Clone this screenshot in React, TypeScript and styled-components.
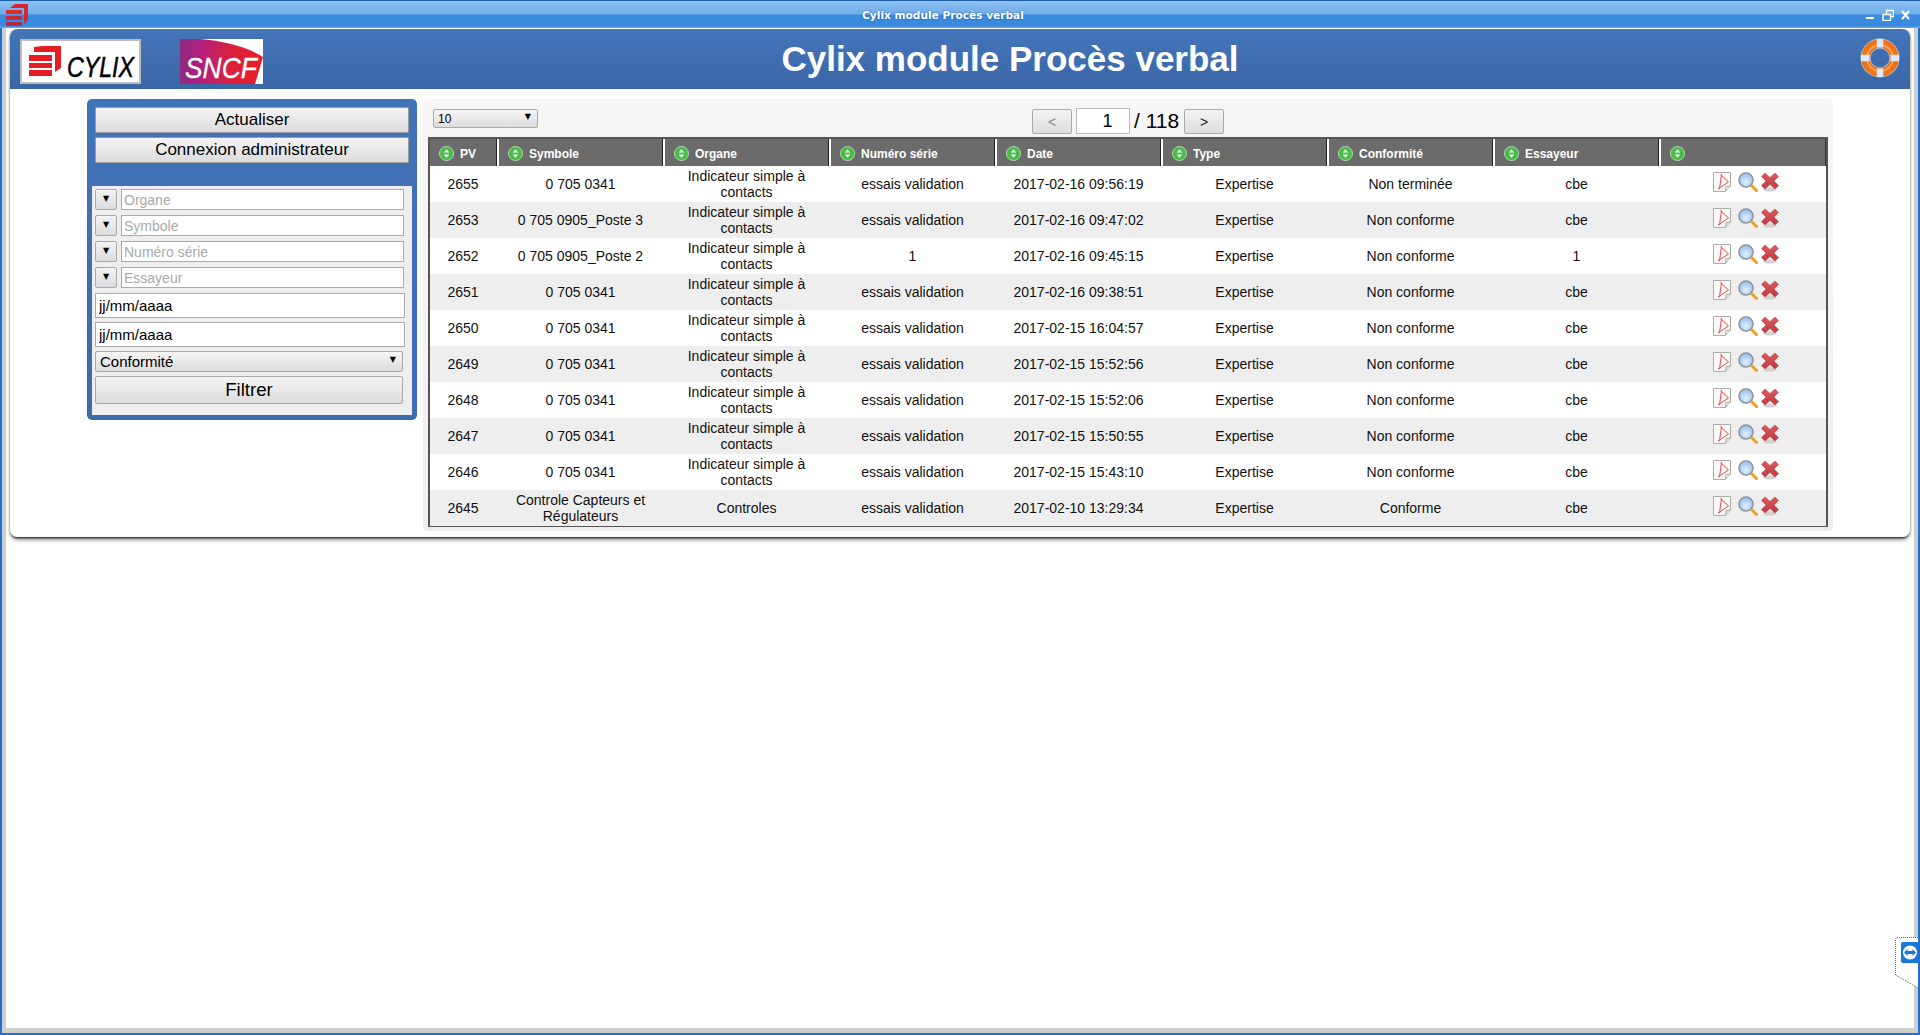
import React from "react";
import styled, { createGlobalStyle } from "styled-components";

const Global = createGlobalStyle`
  html, body { margin: 0; padding: 0; height: 100%; background: #fff; }
  #root { height: 100%; }
  * { box-sizing: border-box; }
`;

const Sans = `"Liberation Sans", Arial, sans-serif`;

const Frame = styled.div`
  height: 1035px;
  display: flex;
  flex-direction: column;
  font-family: ${Sans};
  overflow: hidden;
  position: relative;
`;

const TitleBar = styled.div`
  height: 28px;
  flex: none;
  display: flex;
  align-items: center;
  position: relative;
  padding-left: 5px;
  border-top: 1px solid #1f5fa8;
  background: linear-gradient(180deg, #8fc2f1 0%, #6fadec 48%, #3b8bdf 52%, #3a89dd 92%, #6aa9ea 100%);
`;

const TitleText = styled.div`
  flex: 1;
  text-align: center;
  color: #fff;
  font: bold 10.6px "DejaVu Sans", sans-serif;
  margin-right: 9px;
  text-shadow: 0 0 2px rgba(20, 60, 120, 0.7);
`;

const WinControls = styled.div`
  display: flex;
  align-items: center;
  gap: 7.5px;
  margin: 1px 10px 0 0;
`;

const FrameBody = styled.div`
  flex: 1;
  display: flex;
  flex-direction: column;
  border-style: solid;
  border-color: #1f70d0;
  border-width: 0 2px 2px 2px;
`;

const GrayFrame = styled.div`
  flex: 1;
  border-style: solid;
  border-color: #cdcdcd;
  border-width: 0 4px 5px 4px;
  background: #fff;
  padding: 1px 4px 0 4px;
`;

const Card = styled.div`
  background: #fff;
  border-radius: 8px;
  box-shadow: -1px 0 0 #c4c4c4, 1px 0 0 #c4c4c4, 0 1px 0 0 #444, 0 2px 1px 0 #777, 0 3px 3px 1px #bbb;
  height: 508px;
  display: flex;
  flex-direction: column;
`;

const Header = styled.header`
  height: 60px;
  flex: none;
  display: flex;
  align-items: center;
  position: relative;
  padding-left: 10px;
  border-radius: 8px 8px 0 0;
  background: linear-gradient(180deg, #4475ba 0%, #3a66a6 100%);
`;

const LogoBox = styled.div<{ $ml?: number; $w: number }>`
  width: ${(p) => p.$w}px;
  height: 45px;
  margin-left: ${(p) => p.$ml ?? 0}px;
  flex: none;
  margin-top: 5px;
`;

const HeaderTitle = styled.h1`
  flex: 1;
  margin: 0;
  padding-right: 102px;
  text-align: center;
  color: #fff;
  font: bold 35px ${Sans};
  white-space: nowrap;
`;

const Help = styled.div`
  width: 42px;
  height: 42px;
  flex: none;
  margin-right: 9px;
  margin-top: -2px;
`;

const Content = styled.div`
  display: flex;
  align-items: flex-start;
  padding: 10px 0 0 77px;
`;

const Side = styled.aside`
  width: 330px;
  height: 321px;
  flex: none;
  background: linear-gradient(180deg, #4173b8 0%, #3d6cae 100%);
  border-radius: 5px;
  padding: 8px 5px 5px;
  display: flex;
  flex-direction: column;
`;

const GradBtn = styled.button<{ $w?: number; $h: number; $fs: number }>`
  display: block;
  width: ${(p) => (p.$w ? `${p.$w}px` : "100%")};
  height: ${(p) => p.$h}px;
  padding: 0;
  border: 1px solid #9c9c9c;
  border-radius: 1px;
  color: #000;
  font: ${(p) => p.$fs}px ${Sans};
  background: linear-gradient(180deg, #f4f4f4 0%, #dcdcdc 100%);
`;

const TopBtns = styled.div`
  display: flex;
  flex-direction: column;
  gap: 4px;
  padding: 0 3px;
`;

const FilterBox = styled.div`
  margin-top: 23px;
  flex: 1;
  background: #eee;
  padding: 3px;
  display: flex;
  flex-direction: column;
`;

const ComboRow = styled.div`
  display: flex;
  gap: 4px;
  height: 21px;
  margin-bottom: 5px;
  width: 309px;
`;

const ArrowBtn = styled.div`
  width: 22px;
  height: 21px;
  flex: none;
  display: flex;
  justify-content: center;
  padding-top: 4px;
  font: 8px "DejaVu Sans", sans-serif;
  color: #000;
  border: 1px solid #aaa;
  border-radius: 2px;
  background: linear-gradient(180deg, #f4f4f4 0%, #dcdcdc 100%);
`;

const TextIn = styled.input`
  flex: 1;
  min-width: 0;
  height: 21px;
  border: 1px solid #aaa;
  background: #fff;
  padding: 0 2px;
  font: 14px ${Sans};
  &::placeholder { color: #aaa; opacity: 1; }
`;

const DateIn = styled.input`
  display: block;
  width: 310px;
  height: 25px;
  border: 1px solid #aaa;
  background: #fff;
  padding: 0 3px 1px;
  margin-bottom: 4px;
  font: 15px ${Sans};
  color: #000;
  &::placeholder { color: #000; opacity: 1; }
`;

const Dropdown = styled.div<{ $w: number; $h: number; $fs: number; $pl: number }>`
  width: ${(p) => p.$w}px;
  height: ${(p) => p.$h}px;
  display: flex;
  align-items: center;
  justify-content: space-between;
  padding: 0 6px 0 ${(p) => p.$pl}px;
  color: #000;
  font: ${(p) => p.$fs}px ${Sans};
  border: 1px solid #aaa;
  border-radius: 2px;
  background: linear-gradient(180deg, #f6f6f6 0%, #dcdcdc 100%);
`;

const Caret = styled.span`
  font: 8px "DejaVu Sans", sans-serif;
  position: relative;
  top: -2px;
`;

const FilterBtn = styled(GradBtn)`
  margin-top: 4px;
  border-radius: 2px;
  border-color: #aaa;
`;

const Main = styled.main`
  margin-left: 6px;
  width: 1410px;
  height: 432px;
  flex: none;
  background: linear-gradient(180deg, #f6f6f6 0%, #eeeeee 100%);
  border-radius: 5px;
  padding: 10px 5px 0;
`;

const Toolbar = styled.div`
  height: 28px;
  display: flex;
  align-items: flex-start;
  position: relative;
  padding-left: 5px;
`;

const Pager = styled.div`
  position: absolute;
  left: 604px;
  top: -1px;
  display: flex;
  align-items: center;
  gap: 4px;
`;

const PageBtn = styled.button<{ $off?: boolean }>`
  width: 40px;
  height: 25px;
  margin-top: 1px;
  padding: 0;
  border: 1px solid #aaa;
  border-radius: 2px;
  font: 14px ${Sans};
  color: ${(p) => (p.$off ? "#888" : "#222")};
  background: linear-gradient(180deg, #f4f4f4 0%, #dcdcdc 100%);
`;

const PageIn = styled.input`
  width: 54px;
  height: 26px;
  border: 1px solid #bbb;
  background: #fff;
  padding: 0 0 0 9px;
  text-align: center;
  color: #000;
  font: 18px ${Sans};
`;

const PageCount = styled.span`
  font: 21px ${Sans};
  color: #000;
  width: 46px;
  white-space: nowrap;
`;

const Table = styled.table`
  width: 1400px;
  border: 2px solid #555;
  border-bottom-width: 1px;
  border-collapse: separate;
  border-spacing: 0;
  table-layout: fixed;
  background: #fff;
`;

const Th = styled.th<{ $w: number }>`
  width: ${(p) => p.$w}px;
  height: 27px;
  padding: 2px 0 0 9px;
  background: #6b6b6b;
  border-right: 2px solid #fff;
  box-shadow: inset -1px 0 0 #222;
  color: #fff;
  font: bold 12px ${Sans};
  text-align: left;
  &:last-child { border-right: 0; box-shadow: inset -1px 0 0 #333; }
`;

const ThInner = styled.span`
  display: flex;
  align-items: center;
  gap: 6px;
`;

const Tr = styled.tr<{ $alt: boolean }>`
  background: ${(p) => (p.$alt ? "#eeeeee" : "#fff")};
`;

const Td = styled.td`
  height: 36px;
  padding: 0 5px 0 2px;
  text-align: center;
  color: #111;
  font: 14px/16px ${Sans};
`;

const PvCell = styled(Td)`
  padding: 0 3px 0 0;
`;

const ActionCell = styled.td`
  height: 36px;
  padding: 0;
`;

const Actions = styled.div`
  display: flex;
  align-items: center;
  gap: 3px;
  padding-left: 52px;
  margin-top: -4px;
  & > svg:nth-child(2) { margin-left: 4px; }
`;

const Tab = styled.div`
  position: absolute;
  right: 2px;
  top: 937px;
  width: 24px;
  height: 52px;
`;

const Logo = () => (
  <svg width="121" height="45" viewBox="0 0 121 45">
    <rect x="1" y="1" width="119" height="43" fill="#fff" stroke="#bbb" strokeWidth="2" />
    <path d="M14 13 V8 L22 7 H41 V29 L35 33 V13 Z" fill="#e31e24" />
    <rect x="9" y="16" width="23" height="6" fill="#e31e24" />
    <rect x="9" y="24" width="23" height="5" fill="#e31e24" />
    <rect x="9" y="31" width="23" height="6" fill="#e31e24" />
    <text transform="translate(47 38) scale(0.8 1)" fontFamily="Liberation Sans, sans-serif" fontStyle="italic" fontSize="29" fill="#000" stroke="#000" strokeWidth="0.5">CYLIX</text>
  </svg>
);

const Sncf = () => (
  <svg width="83" height="45" viewBox="0 0 83 45">
    <defs>
      <linearGradient id="sncfg" x1="0" y1="0" x2="1" y2="0">
        <stop offset="0" stopColor="#8e2a7e" />
        <stop offset="0.25" stopColor="#b21f7d" />
        <stop offset="0.6" stopColor="#d9213f" />
        <stop offset="1" stopColor="#e81f25" />
      </linearGradient>
    </defs>
    <rect width="83" height="45" fill="#fff" />
    <path d="M0 0 H20 C44 2 68 8 83 18 L75 45 L0 45 Z" fill="url(#sncfg)" />
    <text transform="translate(5 39) scale(0.88 1)" fontFamily="Liberation Sans, sans-serif" fontStyle="italic" fontSize="30" fill="#fff" stroke="#fff" strokeWidth="0.3">SNCF</text>
  </svg>
);

const AppIcon = () => (
  <svg width="24" height="24" viewBox="0 0 24 24" style={{ marginTop: "-2px", flex: "none" }}>
    <path d="M5 6 L10 2 H23 V18 L19 22 V6 Z" fill="#d8242c" />
    <rect x="1" y="8" width="16" height="4" fill="#e02a32" />
    <rect x="1" y="14" width="16" height="4" fill="#c52a3c" />
    <rect x="1" y="20" width="16" height="4" fill="#b32a48" />
  </svg>
);

const Buoy = () => (
  <svg width="42" height="42" viewBox="0 0 42 42">
    <circle cx="21" cy="21" r="14.5" fill="none" stroke="#b9c6de" strokeWidth="10" />
    <circle cx="21" cy="21" r="14.5" fill="none" stroke="#ee7418" strokeWidth="8.6" />
    <circle cx="21" cy="21" r="13" fill="none" stroke="#f7a765" strokeWidth="2" opacity="0.8" />
    <g stroke="#dfe8fa" strokeWidth="6.5">
      <path d="M21 2 V10.5" />
      <path d="M21 31.5 V40" />
      <path d="M2 21 H10.5" />
      <path d="M31.5 21 H40" />
    </g>
  </svg>
);

const SortIcon = () => (
  <svg width="15" height="15" viewBox="0 0 15 15" style={{ flex: "none" }}>
    <circle cx="7.5" cy="7.5" r="7" fill="#46bb46" stroke="#b9d8b9" strokeWidth="1" />
    <path d="M7.5 3.2 L10.3 6.6 H4.7 Z M7.5 11.8 L10.3 8.4 H4.7 Z" fill="#fff" />
  </svg>
);

const PdfIcon = () => (
  <svg width="18" height="20" viewBox="0 0 18 20" style={{ flex: "none" }}>
    <path d="M0.5 0.5 H17.5 V14 L12.5 19.5 H0.5 Z" fill="#f9f9f9" stroke="#aaa" />
    <path d="M12.5 19.5 L13 14.5 L17.5 14" fill="#e2e2e2" stroke="#aaa" />
    <path d="M8.5 2.5 L6.5 17 M7.5 2.5 L15.5 10 L5 17" fill="none" stroke="#e2474b" strokeWidth="1" />
  </svg>
);

const LensIcon = () => (
  <svg width="20" height="21" viewBox="0 0 20 21" style={{ flex: "none" }}>
    <defs>
      <radialGradient id="lensg" cx="0.5" cy="0.65" r="0.65">
        <stop offset="0" stopColor="#e4f1fe" />
        <stop offset="1" stopColor="#8fbdf0" />
      </radialGradient>
    </defs>
    <path d="M13.5 13.5 L18.5 18.5" stroke="#f0a020" strokeWidth="3" strokeLinecap="round" />
    <circle cx="8" cy="8" r="7" fill="url(#lensg)" stroke="#8d949c" strokeWidth="1.6" />
  </svg>
);

const XIcon = () => (
  <svg width="18" height="20" viewBox="0 0 18 20" style={{ flex: "none" }}>
    <defs>
      <linearGradient id="xg" x1="0" y1="0" x2="0" y2="1">
        <stop offset="0" stopColor="#dc5a5e" />
        <stop offset="1" stopColor="#bf3a40" />
      </linearGradient>
    </defs>
    <ellipse cx="9" cy="17.5" rx="7" ry="2" fill="#d2d2d2" />
    <path d="M4 1 L9 5.5 L14 1 L17.5 4.5 L13 9 L17.5 13.5 L14 17 L9 12.5 L4 17 L0.5 13.5 L5 9 L0.5 4.5 Z" fill="url(#xg)" stroke="#b5464a" strokeWidth="0.6" strokeLinejoin="round" />
  </svg>
);

const Win = ({ w, d, sw }: { w: number; d: string; sw: number }) => (
  <svg width={w} height="12" viewBox={`0 0 ${w} 12`} fill="none" stroke="#fff" strokeWidth={sw} style={{ flex: "none" }}>
    <path d={d} />
  </svg>
);

const TeamViewer = () => (
  <svg width="24" height="52" viewBox="0 0 24 52">
    <path d="M24 51 L1.5 38 V2 L3 0.5 H24" fill="#fff" stroke="#666" strokeDasharray="1 1" />
    <rect x="7" y="5" width="18" height="21" rx="2" fill="#1b78d8" />
    <circle cx="16" cy="15.5" r="7" fill="#fff" />
    <path d="M10 15.5 L13.5 12 V14 H18.5 V12 L22 15.5 L18.5 19 V17 H13.5 V19 Z" fill="#1b78d8" />
  </svg>
);

const columns = ["PV", "Symbole", "Organe", "Numéro série", "Date", "Type", "Conformité", "Essayeur", ""];
const widths = [69, 166, 166, 166, 166, 166, 166, 166, 165];

const IND = "Indicateur simple à contacts";
const rows = [
  ["2655", "0 705 0341", IND, "essais validation", "2017-02-16 09:56:19", "Expertise", "Non terminée", "cbe"],
  ["2653", "0 705 0905_Poste 3", IND, "essais validation", "2017-02-16 09:47:02", "Expertise", "Non conforme", "cbe"],
  ["2652", "0 705 0905_Poste 2", IND, "1", "2017-02-16 09:45:15", "Expertise", "Non conforme", "1"],
  ["2651", "0 705 0341", IND, "essais validation", "2017-02-16 09:38:51", "Expertise", "Non conforme", "cbe"],
  ["2650", "0 705 0341", IND, "essais validation", "2017-02-15 16:04:57", "Expertise", "Non conforme", "cbe"],
  ["2649", "0 705 0341", IND, "essais validation", "2017-02-15 15:52:56", "Expertise", "Non conforme", "cbe"],
  ["2648", "0 705 0341", IND, "essais validation", "2017-02-15 15:52:06", "Expertise", "Non conforme", "cbe"],
  ["2647", "0 705 0341", IND, "essais validation", "2017-02-15 15:50:55", "Expertise", "Non conforme", "cbe"],
  ["2646", "0 705 0341", IND, "essais validation", "2017-02-15 15:43:10", "Expertise", "Non conforme", "cbe"],
  ["2645", "Controle Capteurs et Régulateurs", "Controles", "essais validation", "2017-02-10 13:29:34", "Expertise", "Conforme", "cbe"],
];

const combos = ["Organe", "Symbole", "Numéro série", "Essayeur"];

export default function App() {
  return (
    <Frame>
      <Global />
      <TitleBar>
        <AppIcon />
        <TitleText>Cylix module Procès verbal</TitleText>
        <WinControls>
          <Win w={8} sw={2} d="M0 9 H8" />
          <Win w={12} sw={1.4} d="M1 5.5 H8.5 V11.5 H1 Z M4.5 5 V1.5 H11.5 V7.5 H9" />
          <Win w={9} sw={2} d="M1 2 L8 10 M8 2 L1 10" />
        </WinControls>
      </TitleBar>
      <FrameBody>
        <GrayFrame>
          <Card>
            <Header>
              <LogoBox $w={121}><Logo /></LogoBox>
              <LogoBox $w={83} $ml={39}><Sncf /></LogoBox>
              <HeaderTitle>Cylix module Procès verbal</HeaderTitle>
              <Help><Buoy /></Help>
            </Header>
            <Content>
              <Side>
                <TopBtns>
                  <GradBtn $h={26} $fs={17}>Actualiser</GradBtn>
                  <GradBtn $h={26} $fs={17}>Connexion administrateur</GradBtn>
                </TopBtns>
                <FilterBox>
                  {combos.map((c) => (
                    <ComboRow key={c}>
                      <ArrowBtn>▼</ArrowBtn>
                      <TextIn placeholder={c} readOnly />
                    </ComboRow>
                  ))}
                  <DateIn placeholder="jj/mm/aaaa" readOnly />
                  <DateIn placeholder="jj/mm/aaaa" readOnly />
                  <Dropdown $w={308} $h={21} $fs={15} $pl={4}>
                    <span>Conformité</span>
                    <Caret>▼</Caret>
                  </Dropdown>
                  <FilterBtn $w={308} $h={28} $fs={18.67}>Filtrer</FilterBtn>
                </FilterBox>
              </Side>
              <Main>
                <Toolbar>
                  <Dropdown $w={105} $h={19} $fs={12} $pl={4}>
                    <span>10</span>
                    <Caret>▼</Caret>
                  </Dropdown>
                  <Pager>
                    <PageBtn $off>&lt;</PageBtn>
                    <PageIn defaultValue="1" readOnly />
                    <PageCount>/ 118</PageCount>
                    <PageBtn>&gt;</PageBtn>
                  </Pager>
                </Toolbar>
                <Table>
                  <thead>
                    <tr>
                      {columns.map((c, i) => (
                        <Th key={i} $w={widths[i]}>
                          <ThInner><SortIcon />{c}</ThInner>
                        </Th>
                      ))}
                    </tr>
                  </thead>
                  <tbody>
                    {rows.map((r, i) => (
                      <Tr key={r[0]} $alt={i % 2 === 1}>
                        {r.map((v, j) =>
                          j === 0 ? <PvCell key={j}>{v}</PvCell> : <Td key={j}>{v}</Td>
                        )}
                        <ActionCell>
                          <Actions>
                            <PdfIcon />
                            <LensIcon />
                            <XIcon />
                          </Actions>
                        </ActionCell>
                      </Tr>
                    ))}
                  </tbody>
                </Table>
              </Main>
            </Content>
          </Card>
        </GrayFrame>
      </FrameBody>
      <Tab><TeamViewer /></Tab>
    </Frame>
  );
}
